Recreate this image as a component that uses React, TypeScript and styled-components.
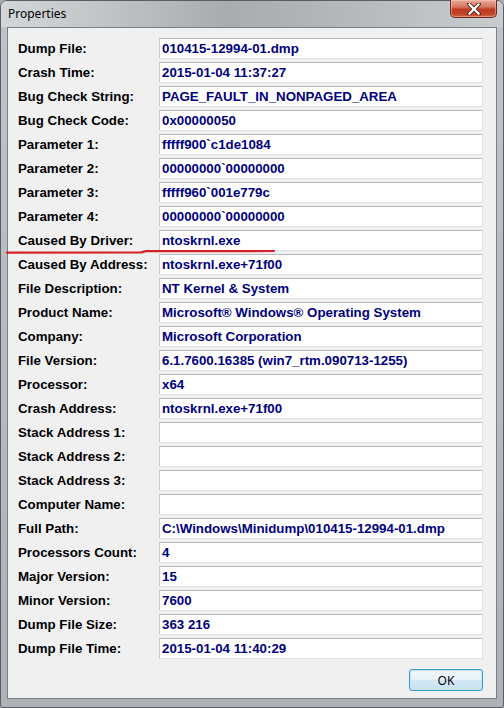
import styled, { createGlobalStyle } from 'styled-components'

const GlobalStyle = createGlobalStyle`
  html, body {
    margin: 0;
    padding: 0;
  }
  body {
    width: 504px;
    height: 708px;
    overflow: hidden;
    background: #a9aeb3;
  }
`

const Window = styled.div`
  position: relative;
  width: 504px;
  height: 708px;
  box-sizing: border-box;
  display: flex;
  flex-direction: column;
  padding: 0 6px 8px;
  border: 1px solid #5a5e63;
  border-radius: 7px 7px 3px 3px;
  background: linear-gradient(180deg, #cdd1d5 0%, #bfc3c7 4%, #b7bbbf 50%, #aeb2b6 100%);
`

const TitleBar = styled.div`
  height: 26px;
  display: flex;
  align-items: flex-start;
  justify-content: space-between;
  background: linear-gradient(90deg, #d3d6d9 0%, #c2c5c8 20%, #a9acaf 45%, #b6b9bc 70%, #c9ccce 100%);
  margin: 0 -6px;
  padding: 0 6px;
  border-radius: 6px 6px 0 0;
`

const Title = styled.span`
  font-family: 'Noto Sans', 'DejaVu Sans', sans-serif;
  font-size: 12px;
  color: #000;
  padding: 4px 0 0 1px;
`

const CloseButton = styled.button`
  width: 47px;
  height: 18px;
  margin-top: -1px;
  padding: 0;
  display: flex;
  align-items: center;
  justify-content: center;
  border: 1px solid #6b2b22;
  border-top: 0;
  border-radius: 0 0 5px 5px;
  background: linear-gradient(180deg, #e9a898 0%, #d77862 40%, #be3b22 55%, #bf4229 80%, #d6623f 100%);
  box-shadow: inset 0 0 0 1px rgba(255, 220, 210, 0.4);
`

const Client = styled.div`
  flex: 1;
  display: flex;
  flex-direction: column;
  background: #f0f0f0;
  border: 1px solid #7b7f85;
  padding: 10px 13px 0 10px;
`

const Fields = styled.div`
  display: grid;
  grid-template-columns: 141px 324px;
  grid-auto-rows: 21px;
  row-gap: 3px;
`

const Label = styled.div`
  display: flex;
  align-items: center;
  font-family: 'Liberation Sans', Arial, sans-serif;
  font-weight: bold;
  font-size: 13.3px;
  color: #000;
  white-space: nowrap;
`

const Value = styled.div`
  display: flex;
  align-items: center;
  box-sizing: border-box;
  padding: 0 2px;
  background: #fff;
  border: 1px solid #e2e3e5;
  border-top-color: #b5b7ba;
  border-left-color: #c9cbce;
  font-family: 'Liberation Sans', Arial, sans-serif;
  font-weight: bold;
  font-size: 13.3px;
  color: #000080;
  white-space: nowrap;
  overflow: hidden;
`

const Footer = styled.div`
  display: flex;
  justify-content: flex-end;
  padding: 10px 0 0;
  width: 465px;
`

const OkButton = styled.button`
  width: 74px;
  height: 22px;
  padding: 0;
  font-family: 'Noto Sans', 'DejaVu Sans', sans-serif;
  font-size: 12px;
  color: #000;
  border: 1px solid #3d9ad0;
  border-radius: 3px;
  background: linear-gradient(180deg, #f3f9fc 0%, #e6f2f9 48%, #d3e8f4 52%, #c6e1f1 100%);
  box-shadow: inset 0 0 0 1px #bfe6f9;
`

const Marker = styled.svg`
  position: absolute;
  left: 5px;
  top: 247px;
  pointer-events: none;
`

const rows: [string, string][] = [
  ['Dump File:', '010415-12994-01.dmp'],
  ['Crash Time:', '2015-01-04 11:37:27'],
  ['Bug Check String:', 'PAGE_FAULT_IN_NONPAGED_AREA'],
  ['Bug Check Code:', '0x00000050'],
  ['Parameter 1:', 'fffff900`c1de1084'],
  ['Parameter 2:', '00000000`00000000'],
  ['Parameter 3:', 'fffff960`001e779c'],
  ['Parameter 4:', '00000000`00000000'],
  ['Caused By Driver:', 'ntoskrnl.exe'],
  ['Caused By Address:', 'ntoskrnl.exe+71f00'],
  ['File Description:', 'NT Kernel & System'],
  ['Product Name:', 'Microsoft® Windows® Operating System'],
  ['Company:', 'Microsoft Corporation'],
  ['File Version:', '6.1.7600.16385 (win7_rtm.090713-1255)'],
  ['Processor:', 'x64'],
  ['Crash Address:', 'ntoskrnl.exe+71f00'],
  ['Stack Address 1:', ''],
  ['Stack Address 2:', ''],
  ['Stack Address 3:', ''],
  ['Computer Name:', ''],
  ['Full Path:', 'C:\\Windows\\Minidump\\010415-12994-01.dmp'],
  ['Processors Count:', '4'],
  ['Major Version:', '15'],
  ['Minor Version:', '7600'],
  ['Dump File Size:', '363 216'],
  ['Dump File Time:', '2015-01-04 11:40:29'],
]

export default function App() {
  return (
    <Window>
      <GlobalStyle />
      <TitleBar>
        <Title>Properties</Title>
        <CloseButton>
          <svg width='14' height='12' viewBox='0 0 14 12'>
            <path d='M2 1 L12 11 M12 1 L2 11' stroke='#5a2a22' strokeWidth='4' strokeLinecap='square' />
            <path d='M2.5 1.5 L11.5 10.5 M11.5 1.5 L2.5 10.5' stroke='#fff' strokeWidth='2.2' strokeLinecap='square' />
          </svg>
        </CloseButton>
      </TitleBar>
      <Client>
        <Fields>
          {rows.map(([label, value]) => [
            <Label key={label}>{label}</Label>,
            <Value key={label + '-v'}>{value}</Value>,
          ])}
        </Fields>
        <Footer>
          <OkButton>OK</OkButton>
        </Footer>
      </Client>
      <Marker width='272' height='8' viewBox='0 0 272 8'>
        <path d='M1 4.6 L135 4.4 L140 3.2 L268 3' stroke='#d5212b' strokeWidth='2.2' fill='none' strokeLinecap='round' />
      </Marker>
    </Window>
  )
}
